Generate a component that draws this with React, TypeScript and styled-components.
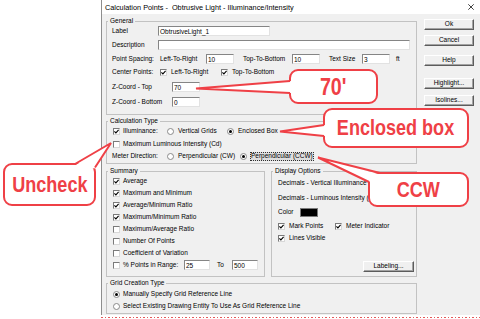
import React from 'react';
import styled, { createGlobalStyle } from 'styled-components';

const RED = '#ef4046';

const GlobalStyle = createGlobalStyle`
  html, body {
    margin: 0;
    padding: 0;
    background: #fff;
  }
  #root {
    width: 480px;
    height: 319px;
  }
`;

const Page = styled.div`
  position: relative;
  width: 480px;
  height: 319px;
  overflow: hidden;
  box-sizing: border-box;
  padding-left: 101px;
  background: #fff;
  font-family: "Liberation Sans", Arial, sans-serif;
  font-size: 6.5px;
  color: #000;
`;

const Dialog = styled.div`
  width: 379px;
  height: 315px;
  box-sizing: border-box;
  border-left: 1px solid #8e8e8e;
  background: #f0f0f0;
  display: flex;
  flex-direction: column;
`;

const TitleBar = styled.div`
  flex: none;
  height: 14px;
  background: #fff;
  display: flex;
  align-items: center;
  justify-content: space-between;
  padding: 0 6px 0 3px;
  font-size: 7.3px;
  white-space: pre;
`;

const Body = styled.div`
  display: flex;
  padding: 3px 0 0 4px;
`;

const LeftCol = styled.div`
  width: 311px;
  display: flex;
  flex-direction: column;
`;

const ButtonCol = styled.div`
  width: 50px;
  margin: 2px 0 0 7px;
  display: flex;
  flex-direction: column;
`;

const Group = styled.fieldset<{ $h: number; $w?: number; $mt?: number; $ml?: number }>`
  flex: none;
  margin: ${p => p.$mt ?? 0}px 0 0 ${p => p.$ml ?? 0}px;
  padding: 0;
  min-width: 0;
  height: ${p => p.$h}px;
  width: ${p => (p.$w ? `${p.$w}px` : 'auto')};
  box-sizing: border-box;
  border: 1px solid #c2c2c2;
`;

const Legend = styled.legend`
  margin-left: 1px;
  padding: 0 2px;
  height: 8px;
  line-height: 8px;
  font-size: 6.5px;
`;

const GroupBody = styled.div<{ $pl: number; $pr?: number }>`
  display: flex;
  flex-direction: column;
  padding: 0 ${p => p.$pr ?? 0}px 0 ${p => p.$pl}px;
`;

const Row = styled.div<{ $h?: number; $mt?: number; $end?: boolean }>`
  display: flex;
  align-items: center;
  justify-content: ${p => (p.$end ? 'flex-end' : 'flex-start')};
  height: ${p => p.$h ?? 10}px;
  margin-top: ${p => p.$mt ?? 0}px;
  white-space: nowrap;
`;

const Text = styled.span<{ $w?: number; $ml?: number }>`
  flex: none;
  width: ${p => (p.$w ? `${p.$w}px` : 'auto')};
  margin-left: ${p => p.$ml ?? 0}px;
  line-height: 1;
`;

const FocusText = styled.span<{ $ml?: number }>`
  flex: none;
  margin-left: ${p => p.$ml ?? 0}px;
  padding: 1px 1px;
  line-height: 1;
  background: #dedede;
  outline: 1px dotted #303030;
  outline-offset: -1px;
`;

const Field = styled.div<{ $w: number; $h?: number; $ml?: number }>`
  flex: none;
  width: ${p => p.$w}px;
  height: ${p => p.$h ?? 10}px;
  margin-left: ${p => p.$ml ?? 0}px;
  box-sizing: border-box;
  padding-left: 1px;
  display: flex;
  align-items: center;
  background: #fff;
  border: 1px solid;
  border-color: #858585 #e2e2e2 #e2e2e2 #858585;
`;

const Box = styled.span<{ $ml?: number }>`
  flex: none;
  width: 7px;
  height: 7px;
  margin-left: ${p => p.$ml ?? 0}px;
  box-sizing: border-box;
  display: flex;
  align-items: center;
  justify-content: center;
  background: #fff;
  border: 1px solid;
  border-color: #7a7a7a #d8d8d8 #d8d8d8 #7a7a7a;
`;

const Round = styled(Box)`
  border-radius: 50%;
  border-color: #8a8a8a;
`;

const Dot = styled.span`
  width: 3px;
  height: 3px;
  border-radius: 50%;
  background: #000;
`;

const Swatch = styled.span<{ $ml?: number }>`
  flex: none;
  width: 18px;
  height: 9px;
  margin-left: ${p => p.$ml ?? 0}px;
  box-sizing: border-box;
  background: #000;
  border: 1px solid #7a7a7a;
`;

const Button = styled.div<{ $mt?: number; $w?: number }>`
  flex: none;
  width: ${p => p.$w ?? 50}px;
  height: 11px;
  margin-top: ${p => p.$mt ?? 0}px;
  box-sizing: border-box;
  display: flex;
  align-items: center;
  justify-content: center;
  line-height: 1;
  background: #f0f0f0;
  border: 1px solid;
  border-color: #fff #5c5c5c #5c5c5c #fff;
  box-shadow: inset -1px -1px 0 #a3a3a3;
`;

const BottomTrace = styled.div`
  width: 379px;
  height: 1px;
  margin-top: 2px;
  background: repeating-linear-gradient(90deg, #e45a5a 0 2px, transparent 2px 4px, #e45a5a 4px 5px, transparent 5px 7px);
`;

const CalloutBox = styled.div<{ $x: number; $y: number; $w: number; $h: number; $size: number }>`
  position: absolute;
  left: ${p => p.$x}px;
  top: ${p => p.$y}px;
  width: ${p => p.$w}px;
  height: ${p => p.$h}px;
  box-sizing: border-box;
  border: 2px solid ${RED};
  border-radius: 9px;
  background: #fff;
  display: flex;
  align-items: center;
  justify-content: center;
  color: ${RED};
  font-family: "Liberation Sans", Arial, sans-serif;
  font-weight: 700;
  font-size: ${p => p.$size}px;
  line-height: 1;
  white-space: nowrap;
`;

/* narrow bold face, as in the annotation style */
const CalloutText = styled.span`
  display: inline-block;
  transform: scaleX(0.82);
`;

const TailLayer = styled.svg`
  position: absolute;
  left: 0;
  top: 0;
  pointer-events: none;
`;

const Check = ({ on = true, ml }: { on?: boolean; ml?: number }) => (
  <Box $ml={ml}>
    {on && (
      <svg width="5" height="5" viewBox="0 0 5 5">
        <path d="M0.4 2.4 L1.9 3.9 L4.6 0.9" fill="none" stroke="#000" strokeWidth="1.1" />
      </svg>
    )}
  </Box>
);

const Radio = ({ on = false, ml }: { on?: boolean; ml?: number }) => (
  <Round $ml={ml}>{on && <Dot />}</Round>
);

const CloseIcon = () => (
  <svg width="6" height="6" viewBox="0 0 6 6">
    <path d="M0.3 0.3 L5.7 5.7 M5.7 0.3 L0.3 5.7" stroke="#111" strokeWidth="0.8" />
  </svg>
);

type Pt = [number, number];
const tails: { fill: Pt[]; line: Pt[] }[] = [
  { fill: [[291.5, 81], [196, 88.5], [291.5, 93]], line: [[290, 81], [196, 88.5], [290, 93]] },
  { fill: [[325.5, 125], [280, 131.5], [325.5, 136]], line: [[324, 125], [280, 131.5], [324, 136]] },
  { fill: [[75, 165.5], [111, 143], [94.5, 168.5]], line: [[75, 164], [111, 143], [95, 167.5]] },
  { fill: [[380, 174.5], [318, 157.5], [370.5, 182]], line: [[380, 173], [318, 157.5], [369, 182]] },
];

const pts = (list: Pt[]) => list.map(p => p.join(',')).join(' ');

const summary: [string, boolean][] = [
  ['Average', true],
  ['Maximum and Minimum', true],
  ['Average/Minimum Ratio', true],
  ['Maximum/Minimum Ratio', true],
  ['Maximum/Average Ratio', false],
  ['Number Of Points', false],
  ['Coefficient of Variation', false],
];

export default function App() {
  return (
    <Page>
      <GlobalStyle />
      <Dialog>
        <TitleBar>
          <span>Calculation Points -  Obtrusive Light - Illuminance/Intensity</span>
          <CloseIcon />
        </TitleBar>
        <Body>
          <LeftCol>
            <Group $h={98}>
              <Legend>General</Legend>
              <GroupBody $pl={5}>
                <Row $mt={1}>
                  <Text $w={46}>Label</Text>
                  <Field $w={112}>ObtrusiveLight_1</Field>
                </Row>
                <Row $mt={4}>
                  <Text $w={46}>Description</Text>
                  <Field $w={252} />
                </Row>
                <Row $mt={4}>
                  <Text $w={48}>Point Spacing:</Text>
                  <Text $w={46}>Left-To-Right</Text>
                  <Field $w={28}>10</Field>
                  <Text $w={49} $ml={9}>Top-To-Bottom</Text>
                  <Field $w={28}>10</Field>
                  <Text $w={33} $ml={9}>Text Size</Text>
                  <Field $w={28}>3</Field>
                  <Text $ml={6}>ft</Text>
                </Row>
                <Row $mt={3}>
                  <Text $w={48}>Center Points:</Text>
                  <Check />
                  <Text $w={50} $ml={4}>Left-To-Right</Text>
                  <Check />
                  <Text $ml={4}>Top-To-Bottom</Text>
                </Row>
                <Row $mt={5}>
                  <Text $w={60}>Z-Coord - Top</Text>
                  <Field $w={28}>70</Field>
                </Row>
                <Row $mt={5}>
                  <Text $w={60}>Z-Coord - Bottom</Text>
                  <Field $w={28}>0</Field>
                </Row>
              </GroupBody>
            </Group>

            <Group $h={47} $mt={2}>
              <Legend>Calculation Type</Legend>
              <GroupBody $pl={5}>
                <Row $h={9} $mt={2}>
                  <Check ml={1} />
                  <Text $w={44} $ml={3}>Illuminance:</Text>
                  <Radio />
                  <Text $w={49} $ml={4}>Vertical Grids</Text>
                  <Radio on />
                  <Text $ml={4}>Enclosed Box</Text>
                </Row>
                <Row $h={9} $mt={4}>
                  <Check on={false} ml={1} />
                  <Text $ml={3}>Maximum Luminous Intensity (Cd)</Text>
                </Row>
                <Row $h={9} $mt={3}>
                  <Text $w={55}>Meter Direction:</Text>
                  <Radio />
                  <Text $w={62} $ml={4}>Perpendicular (CW)</Text>
                  <Radio on />
                  <FocusText $ml={3}>Perpendicular (CCW)</FocusText>
                </Row>
              </GroupBody>
            </Group>

            <Row $h={110} $mt={3}>
              <Group $h={110} $w={159}>
                <Legend>Summary</Legend>
                <GroupBody $pl={5}>
                  {summary.map(([label, on]) => (
                    <Row key={label} $h={12}>
                      <Check on={on} ml={1} />
                      <Text $ml={3}>{label}</Text>
                    </Row>
                  ))}
                  <Row $h={12}>
                    <Check on={false} ml={1} />
                    <Text $w={61} $ml={3}>% Points in Range:</Text>
                    <Field $w={26}>25</Field>
                    <Text $w={15} $ml={7}>To</Text>
                    <Field $w={26}>500</Field>
                  </Row>
                </GroupBody>
              </Group>

              <Group $h={110} $w={146} $ml={6}>
                <Legend>Display Options</Legend>
                <GroupBody $pl={6} $pr={2}>
                  <Row $mt={3}>
                    <Text>Decimals - Vertical Illuminance</Text>
                  </Row>
                  <Row $mt={5}>
                    <Text>Decimals - Luminous Intensity (Cd)</Text>
                  </Row>
                  <Row $mt={4}>
                    <Text $w={22}>Color</Text>
                    <Swatch />
                  </Row>
                  <Row $mt={4}>
                    <Check />
                    <Text $w={46} $ml={4}>Mark Points</Text>
                    <Check />
                    <Text $ml={4}>Meter Indicator</Text>
                  </Row>
                  <Row $mt={2}>
                    <Check />
                    <Text $ml={4}>Lines Visible</Text>
                  </Row>
                  <Row $h={11} $mt={18} $end>
                    <Button $w={51}>Labeling...</Button>
                  </Row>
                </GroupBody>
              </Group>
            </Row>

            <Group $h={35} $mt={2}>
              <Legend>Grid Creation Type</Legend>
              <GroupBody $pl={5}>
                <Row $mt={2}>
                  <Radio on ml={1} />
                  <Text $ml={3}>Manually Specify Grid Reference Line</Text>
                </Row>
                <Row $mt={2}>
                  <Radio ml={1} />
                  <Text $ml={3}>Select Existing Drawing Entity To Use As Grid Reference Line</Text>
                </Row>
              </GroupBody>
            </Group>
          </LeftCol>

          <ButtonCol>
            <Button>Ok</Button>
            <Button $mt={5}>Cancel</Button>
            <Button $mt={9}>Help</Button>
            <Button $mt={12}>Highlight...</Button>
            <Button $mt={6}>Isolines...</Button>
          </ButtonCol>
        </Body>
      </Dialog>
      <BottomTrace />

      <CalloutBox $x={289} $y={69} $w={89} $h={35} $size={24}>
        <CalloutText>70'</CalloutText>
      </CalloutBox>
      <CalloutBox $x={323} $y={108} $w={146} $h={40} $size={22}>
        <CalloutText>Enclosed box</CalloutText>
      </CalloutBox>
      <CalloutBox $x={3} $y={163} $w={93} $h={43} $size={22}>
        <CalloutText>Uncheck</CalloutText>
      </CalloutBox>
      <CalloutBox $x={368} $y={172} $w={101} $h={35} $size={22}>
        <CalloutText>CCW</CalloutText>
      </CalloutBox>

      <TailLayer width="480" height="319" viewBox="0 0 480 319">
        {tails.map((t, i) => (
          <g key={i}>
            <polygon points={pts(t.fill)} fill="#fff" />
            <polyline points={pts(t.line)} fill="none" stroke={RED} strokeWidth="2" strokeLinejoin="miter" />
          </g>
        ))}
      </TailLayer>
    </Page>
  );
}
